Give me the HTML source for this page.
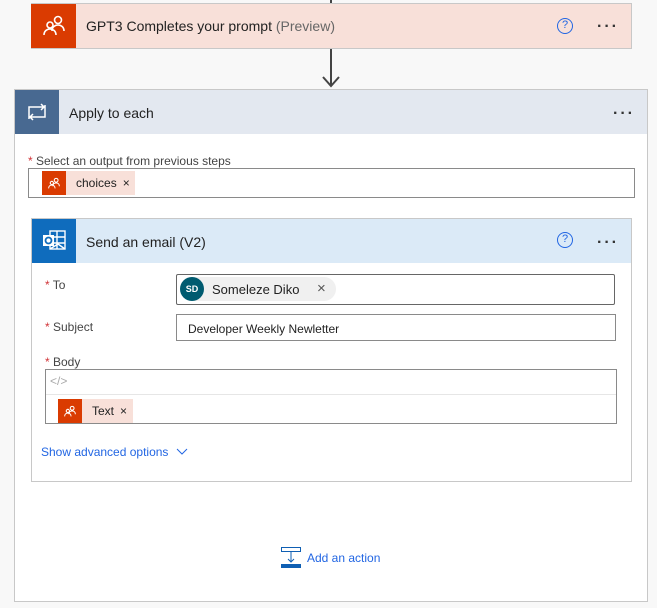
<!DOCTYPE html>
<html><head><meta charset="utf-8"><style>
*{box-sizing:border-box;margin:0;padding:0}
body{width:657px;height:608px;background:#f8f8f8;font-family:"Segoe UI","Liberation Sans",sans-serif;position:relative;overflow:hidden;color:#222;font-size:13px}
.abs{position:absolute}
.dots{position:absolute;font-size:16px;letter-spacing:2px;color:#333;font-weight:bold}
.q{position:absolute;width:16px;height:16px;border:1.5px solid #2266e3;border-radius:50%;color:#2266e3;font-size:11px;text-align:center;line-height:13px}
.req{color:#d13438}
.lbl{position:absolute;font-size:12px;color:#444}
.tok{position:absolute;height:24px;background:#f8e0d9;display:flex;align-items:center;font-size:12px;color:#222}
.tok .ic{width:24px;height:24px;background:#da3b01;display:flex;align-items:center;justify-content:center}
</style></head><body>
<div class="abs" style="left:330px;top:0;width:2px;height:3px;background:#444"></div>
<div class="abs" style="left:31px;top:3px;width:601px;height:46px;background:#f8e0d9;border:1px solid #c8c8c8"></div>
<div class="abs" style="left:31px;top:4px;width:45px;height:44px;background:#da3b01;display:flex;align-items:center;justify-content:center">
<svg width="26" height="24" viewBox="0 0 26 24" fill="none" stroke="#fff" stroke-width="1.6"><circle cx="17" cy="6" r="3.5"/><path d="M11 17c0-4 3-6 6-6s6 2 6 6"/><circle cx="9" cy="11" r="3"/><path d="M3 21c0-4 3-6 6-6s6 2 6 6"/></svg></div>
<div class="abs" style="left:86px;top:18px;font-size:14px;color:#222">GPT3 Completes your prompt <span style="color:#666">(Preview)</span></div>
<div class="q" style="left:557px;top:18px">?</div>
<div class="dots" style="left:597px;top:18px">···</div>
<div class="abs" style="left:330px;top:49px;width:2px;height:37px;background:#444"></div>
<svg class="abs" style="left:321px;top:75px" width="20" height="14"><path d="M2 2l8 9 8-9" stroke="#444" stroke-width="2" fill="none"/></svg>

<div class="abs" style="left:14px;top:89px;width:634px;height:513px;background:#fff;border:1px solid #c8c8c8"></div>
<div class="abs" style="left:15px;top:90px;width:632px;height:44px;background:#e3e8f0"></div>
<div class="abs" style="left:15px;top:90px;width:44px;height:44px;background:#486991;display:flex;align-items:center;justify-content:center">
<svg width="22" height="18" viewBox="0 0 22 18" fill="none" stroke="#fff" stroke-width="1.5"><path d="M3 16V4h15M15 1l3 3-3 3M19 2v12H4M7 17l-3-3 3-3"/></svg></div>
<div class="abs" style="left:69px;top:105px;font-size:14px">Apply to each</div>
<div class="dots" style="left:613px;top:105px">···</div>
<div class="lbl" style="left:28px;top:154px"><span class="req">*</span> Select an output from previous steps</div>
<div class="abs" style="left:28px;top:168px;width:607px;height:30px;border:1px solid #8a8a8a"></div>
<div class="tok" style="left:42px;top:171px;width:93px"><div class="ic"><svg width="14" height="13" viewBox="0 0 26 24" fill="none" stroke="#fff" stroke-width="2"><circle cx="17" cy="6" r="3.5"/><path d="M11 17c0-4 3-6 6-6s6 2 6 6"/><circle cx="9" cy="11" r="3"/><path d="M3 21c0-4 3-6 6-6s6 2 6 6"/></svg></div><span style="margin-left:10px">choices</span><span style="margin-left:6px">×</span></div>

<div class="abs" style="left:31px;top:218px;width:601px;height:264px;border:1px solid #c8c8c8;background:#fff"></div>
<div class="abs" style="left:32px;top:219px;width:599px;height:44px;background:#dbeaf7"></div>
<div class="abs" style="left:32px;top:219px;width:44px;height:44px;background:#0f6cbd;display:flex;align-items:center;justify-content:center">
<svg width="28" height="26" viewBox="0 0 28 26" fill="none" stroke="#fff" stroke-width="1.4"><rect x="10" y="3" width="15" height="18"/><path d="M10 9h15M10 15h15M17 3v18"/><rect x="3" y="7" width="11" height="11" fill="#fff" stroke="none"/><circle cx="8.5" cy="12.5" r="3" stroke="#0f6cbd" stroke-width="1.8"/><path d="M10 21l8-5 7 5"/></svg></div>
<div class="abs" style="left:86px;top:234px;font-size:14px">Send an email (V2)</div>
<div class="q" style="left:557px;top:232px">?</div>
<div class="dots" style="left:597px;top:234px">···</div>

<div class="lbl" style="left:45px;top:278px"><span class="req">*</span> To</div>
<div class="abs" style="left:176px;top:274px;width:439px;height:31px;border:1px solid #666;border-radius:2px"></div>
<div class="abs" style="left:180px;top:277px;width:156px;height:24px;background:#f0f0f0;border-radius:12px"></div>
<div class="abs" style="left:180px;top:277px;width:24px;height:24px;background:#005b70;border-radius:50%;color:#fff;font-size:9px;font-weight:bold;text-align:center;line-height:24px">SD</div>
<div class="abs" style="left:212px;top:282px;font-size:13px">Someleze Diko</div>
<div class="abs" style="left:317px;top:280px;font-size:15px;color:#555">×</div>
<div class="lbl" style="left:45px;top:320px"><span class="req">*</span> Subject</div>
<div class="abs" style="left:176px;top:314px;width:440px;height:27px;border:1px solid #8a8a8a"></div>
<div class="abs" style="left:188px;top:322px;font-size:12px">Developer Weekly Newletter</div>
<div class="lbl" style="left:45px;top:355px"><span class="req">*</span> Body</div>
<div class="abs" style="left:45px;top:369px;width:572px;height:55px;border:1px solid #8a8a8a"></div>
<div class="abs" style="left:46px;top:394px;width:570px;height:1px;background:#e6e6e6"></div>
<div class="abs" style="left:50px;top:374px;font-size:12px;color:#aaa">&lt;/&gt;</div>
<div class="tok" style="left:58px;top:399px;width:75px"><div class="ic"><svg width="14" height="13" viewBox="0 0 26 24" fill="none" stroke="#fff" stroke-width="2"><circle cx="17" cy="6" r="3.5"/><path d="M11 17c0-4 3-6 6-6s6 2 6 6"/><circle cx="9" cy="11" r="3"/><path d="M3 21c0-4 3-6 6-6s6 2 6 6"/></svg></div><span style="margin-left:10px">Text</span><span style="margin-left:6px">×</span></div>
<div class="abs" style="left:41px;top:445px;font-size:12px;color:#2266e3">Show advanced options</div>
<svg class="abs" style="left:176px;top:448px" width="12" height="8"><path d="M1 1l5 5 5-5" stroke="#2266e3" fill="none"/></svg>

<svg class="abs" style="left:281px;top:547px" width="20" height="21"><rect x="0.5" y="0.5" width="19" height="4" fill="none" stroke="#0f5fb3"/><path d="M10 5v10M7 12l3 3 3-3" stroke="#0f5fb3" fill="none"/><rect x="0" y="17" width="20" height="4" fill="#0f5fb3"/></svg>
<div class="abs" style="left:307px;top:551px;font-size:12px;color:#2266e3">Add an action</div>
</body></html>
